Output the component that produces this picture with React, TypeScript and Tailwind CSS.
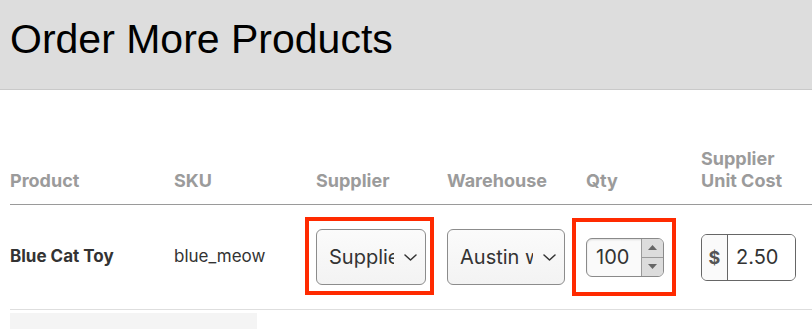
const cols = "grid grid-cols-[164px_142px_131px_139px_115px_1fr]";

const Chevron = () => (
  <svg width="13" height="7" viewBox="0 0 13 7" fill="none" className="shrink-0">
    <polyline points="1,1 6.5,6 12,1" stroke="#333" strokeWidth="1.5" strokeLinecap="round" strokeLinejoin="round" />
  </svg>
);

// fake select so the clipping matches the screenshot
const FakeSelect = ({ label, width }: { label: string; width: string }) => (
  <div
    className={`${width} h-[56px] flex items-center pl-[12px] pr-[8px] rounded-[6px] border border-[#8c8c8c] bg-gradient-to-b from-[#fbfbfb] to-[#f3f3f3] text-[20px] text-[#333]`}
  >
    <span className="flex-1 overflow-hidden whitespace-nowrap mr-[10px]">{label}</span>
    <Chevron />
  </div>
);

export default function App() {
  return (
    <div className="w-[812px] h-[329px] overflow-hidden bg-white font-['Inter',sans-serif]">
      <div className="h-[90px] bg-[#dddddd] border-b border-[#c9c9c9] pl-[10px] pt-[19px]">
        <h1 className="text-[41px] leading-none text-black font-['Liberation_Sans',Arial,sans-serif]">
          Order More Products
        </h1>
      </div>

      <div className="pl-[10px] mt-[58px]">
        {/* header row */}
        <div className={`${cols} items-end pb-[12px] border-b border-[#9a9a9a] text-[18px] leading-[22px] font-bold text-[#9b9b9b]`}>
          <div>Product</div>
          <div>SKU</div>
          <div>Supplier</div>
          <div>Warehouse</div>
          <div>Qty</div>
          <div>
            Supplier
            <br />
            Unit Cost
          </div>
        </div>

        {/* product row */}
        <div className={`${cols} items-center h-[105px] border-b border-[#dedede] text-[17px] text-[#333]`}>
          <div className="font-bold">Blue Cat Toy</div>
          <div>blue_meow</div>
          <div className="relative w-[110px]">
            <FakeSelect label="Supplier A" width="w-[110px]" />
            <div className="absolute -left-[11px] -top-[12px] -right-[8px] -bottom-[10px] border-4 border-[#ff2a00]" />
          </div>
          <div>
            <FakeSelect label="Austin warehouse" width="w-[118px]" />
          </div>
          <div className="relative w-[78px]">
            <div className="w-[78px] h-[39px] flex rounded-[6px] border border-[#8a8a8a] overflow-hidden bg-[#fafafa] shadow-[inset_0_1px_2px_rgba(0,0,0,0.12)]">
              <span className="flex-1 pl-[9px] text-[20px] leading-[37px] text-[#333]">100</span>
              <div className="w-[22px] flex flex-col border-l border-[#9a9a9a] bg-[#dcdcdc]">
                <div className="flex-1 flex items-center justify-center border-b border-[#9a9a9a]">
                  <svg width="9" height="5" viewBox="0 0 9 5">
                    <polygon points="0,5 4.5,0 9,5" fill="#666" />
                  </svg>
                </div>
                <div className="flex-1 flex items-center justify-center">
                  <svg width="9" height="5" viewBox="0 0 9 5">
                    <polygon points="0,0 4.5,5 9,0" fill="#666" />
                  </svg>
                </div>
              </div>
            </div>
            <div className="absolute -left-[14px] -top-[20px] -right-[12px] -bottom-[19px] border-4 border-[#ff2a00]" />
          </div>
          <div className="w-[95px] h-[47px] flex rounded-[6px] border border-[#666] overflow-hidden shadow-[inset_0_1px_2px_rgba(0,0,0,0.1)]">
            <span className="w-[26px] flex items-center justify-center border-r border-[#666] bg-[#fafafa] font-bold text-[18px] text-[#555]">
              $
            </span>
            <span className="flex-1 flex items-center pl-[8px] text-[20px] text-[#333] bg-white">2.50</span>
          </div>
        </div>

        <div className="mt-[3px] w-[247px] h-[17px] bg-[#f4f4f4]" />
      </div>
    </div>
  );
}
